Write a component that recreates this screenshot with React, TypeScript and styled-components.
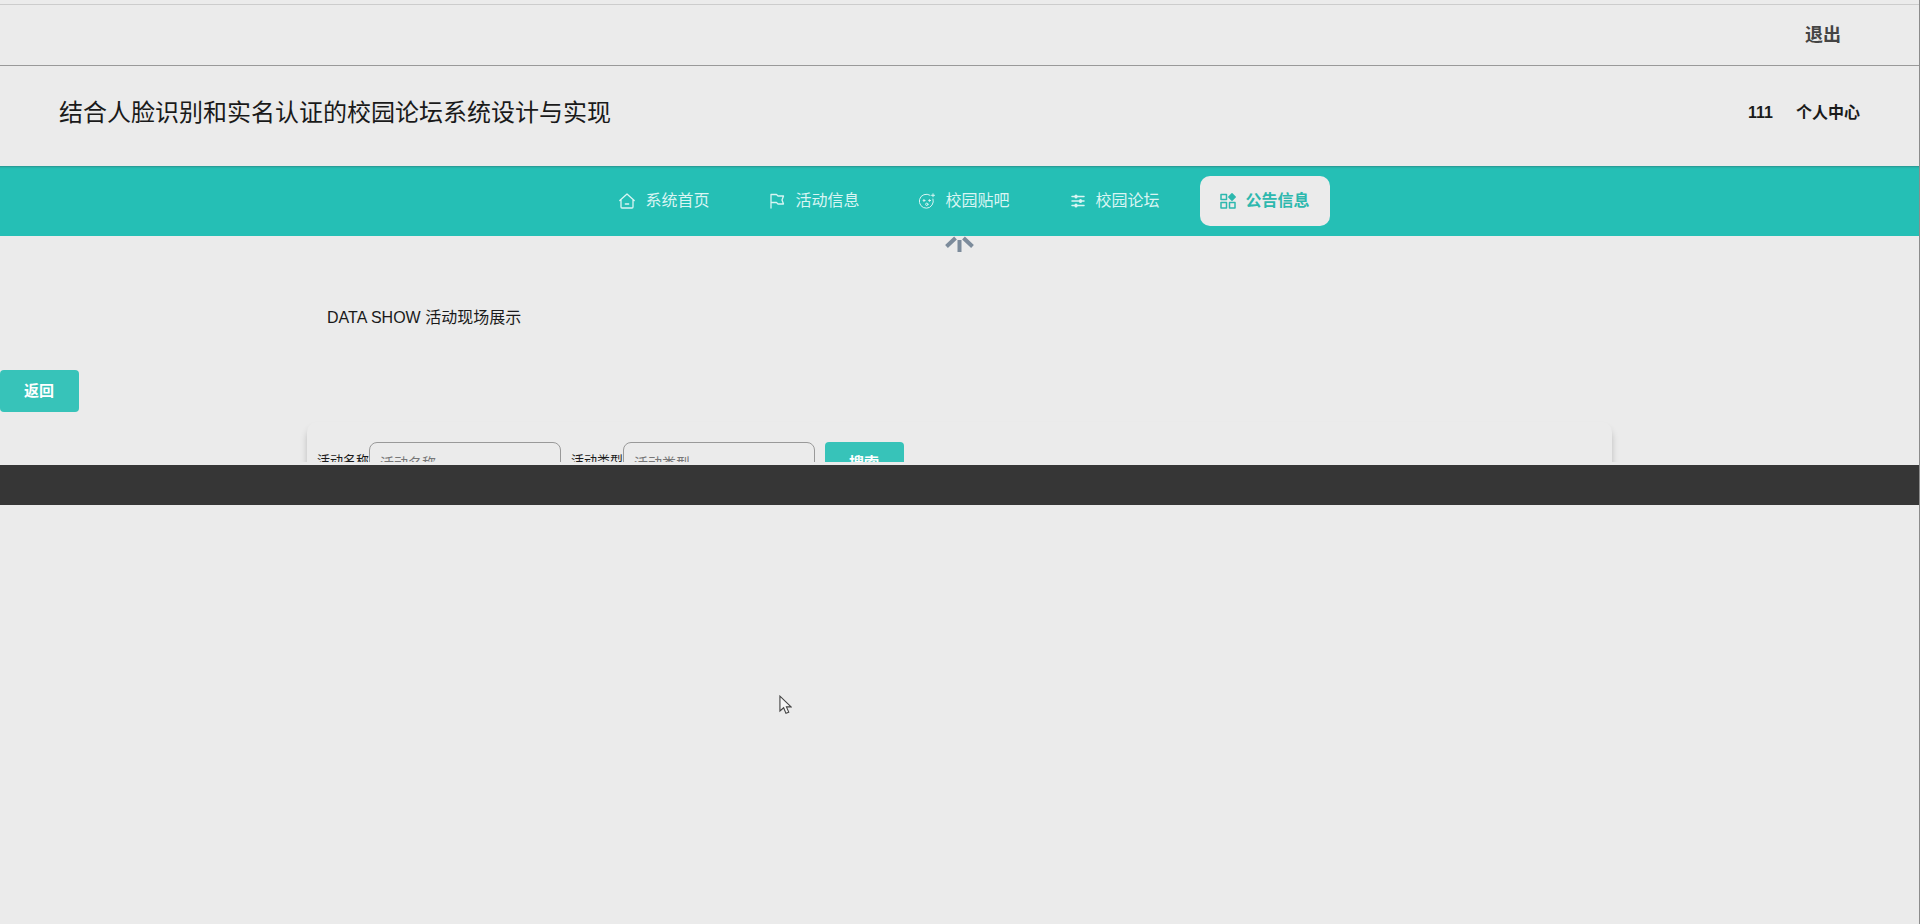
import React from "react";
import styled, { createGlobalStyle } from "styled-components";

const GlobalStyle = createGlobalStyle`
  * { box-sizing: border-box; }
  html { min-height: 100%; background: #ebebeb; }
  body {
    margin: 0;
    color: #1a1a1a;
    font-family: "Liberation Sans", "Noto Sans CJK SC", sans-serif;
    font-size: 16px;
  }
`;

const teal = "#25bfb5";

const Page = styled.div`
  min-height: 100vh;
  padding-top: 4px;
  border-right: 1px solid #8c8c8c;
  background: #ebebeb;
`;

const TopBar = styled.div`
  display: flex;
  align-items: center;
  justify-content: flex-end;
  height: 62px;
  padding: 0 78px;
  border-top: 1px solid #ccc;
  border-bottom: 1px solid #999;
`;

const TextButton = styled.button`
  padding: 0;
  border: 0;
  background: none;
  color: #444;
  font: bold 18px/24px "Liberation Sans", "Noto Sans CJK SC", sans-serif;
  cursor: pointer;
`;

const Header = styled.header`
  display: flex;
  align-items: center;
  justify-content: space-between;
  height: 100px;
  padding: 0 59px 6px 59px;
`;

const Title = styled.h1`
  margin: 0;
  font-size: 24px;
  font-weight: 400;
  line-height: 36px;
`;

const Account = styled.div`
  display: flex;
  gap: 23px;
  font-weight: 700;
  line-height: 24px;
`;

const AccountLink = styled.a`
  color: #1a1a1a;
  text-decoration: none;
`;

const Nav = styled.nav`
  display: flex;
  align-items: center;
  justify-content: center;
  gap: 20px;
  height: 70px;
  padding-left: 10px;
  background: ${teal};
  box-shadow: inset 0 3px 2px -2px #2a918d;
`;

const NavItem = styled.a<{ $active?: boolean }>`
  display: flex;
  align-items: center;
  gap: 10px;
  height: 50px;
  padding: 0 20px;
  border-radius: 10px;
  background: ${(p) => (p.$active ? "#ebebeb" : "transparent")};
  color: ${(p) => (p.$active ? "#2db8ae" : "#d9f5f3")};
  font-weight: ${(p) => (p.$active ? 700 : 400)};
  line-height: 24px;
  text-decoration: none;
`;

const Icon = styled.svg`
  width: 16px;
  height: 16px;
  fill: none;
  stroke: currentColor;
  stroke-linecap: round;
  stroke-linejoin: round;
`;

const Content = styled.main`
  position: relative;
  height: 226px;
  overflow: hidden;
`;

const Spinner = styled.svg`
  position: absolute;
  top: 0;
  left: 50%;
  width: 32px;
  height: 18px;
  margin-left: -16px;
  fill: none;
  stroke: #7c8b9b;
  stroke-width: 4;
`;

const SectionTitle = styled.h2`
  width: 68%;
  margin: 0 auto;
  padding: 70px 20px 40px;
  font-size: 16px;
  font-weight: 400;
  line-height: 24px;
`;

const Button = styled.button`
  height: 42px;
  padding: 0 25px 0 24px;
  border: 0;
  border-radius: 4px;
  background: #37c3b9;
  color: #fff;
  font: bold 15px/24px "Liberation Sans", "Noto Sans CJK SC", sans-serif;
  cursor: pointer;
`;

const SearchPanel = styled.form`
  display: flex;
  gap: 10px;
  width: 68%;
  height: 100px;
  margin: 10px auto 0;
  padding: 20px 10px;
  border-radius: 10px;
  box-shadow: 0 6px 6px #bbb;
`;

const Field = styled.label`
  display: flex;
  height: 42px;
  font-size: 13px;
  line-height: 38px;
`;

const TextInput = styled.input`
  width: 192px;
  height: 42px;
  padding: 0 10px;
  border: 1px solid #999;
  border-radius: 8px;
  background: transparent;
  font: 14px "Liberation Sans", "Noto Sans CJK SC", sans-serif;
  &::placeholder { color: #777; }
`;

const Footer = styled.footer`
  height: 40px;
  margin-top: 3px;
  background: #363636;
`;

const Pointer = styled.svg`
  position: fixed;
  top: 695px;
  left: 779px;
  width: 13px;
  height: 20px;
`;

const HomeIcon = () => (
  <Icon viewBox="0 0 16 16" strokeWidth="1.3">
    <path d="M.8 7.500 8 1l7.200 6.500M2 6.500V14q0 1 1 1h10q1 0 1-1V6.500M6.300 11h3.400" />
  </Icon>
);

const FlagIcon = () => (
  <Icon viewBox="0 0 16 16" strokeWidth="1.3">
    <path d="M2 15V1.500h5.500l1.500 1.500h5.500l-1.500 4 1.500 4H9L7.500 9.500H2" />
  </Icon>
);

const FaceIcon = () => (
  <Icon viewBox="0 0 16 16" strokeWidth="1">
    <path d="M11 2.200A7 7 0 1 0 14 6M14 .8v3M12.500 2.300h3" />
    <circle cx="5" cy="7.500" r=".8" fill="currentColor" />
    <circle cx="10.500" cy="7.500" r=".8" fill="currentColor" />
    <circle cx="7.800" cy="11.300" r="1.200" />
  </Icon>
);

const SlidersIcon = () => (
  <Icon viewBox="0 0 16 16" strokeWidth="1.5">
    <path d="M2 3.500h12M2 8h12M2 12.500h12" />
    <path d="M6 3v1M10.500 7.500v1M6 12v1" strokeWidth="3" />
  </Icon>
);

const GridIcon = () => (
  <Icon viewBox="0 0 16 16" strokeWidth="1.5">
    <path d="M1 1.500h5.500v5H1zM1 9.500h5.500V15H1zM9.500 9.500H15V15H9.500z" />
    <path d="m12 .8 3.200 3.200L12 7.200 8.800 4z" fill="currentColor" />
  </Icon>
);

const navItems = [
  { label: "系统首页", icon: HomeIcon },
  { label: "活动信息", icon: FlagIcon },
  { label: "校园贴吧", icon: FaceIcon },
  { label: "校园论坛", icon: SlidersIcon },
  { label: "公告信息", icon: GridIcon, active: true },
];

export default function App() {
  return (
    <Page>
      <GlobalStyle />
      <TopBar>
        <TextButton type="button">退出</TextButton>
      </TopBar>
      <Header>
        <Title>结合人脸识别和实名认证的校园论坛系统设计与实现</Title>
        <Account>
          <span>111</span>
          <AccountLink href="#profile">个人中心</AccountLink>
        </Account>
      </Header>
      <Nav>
        {navItems.map(({ label, icon: ItemIcon, active }) => (
          <NavItem key={label} href="#" $active={active}>
            <ItemIcon />
            {label}
          </NavItem>
        ))}
      </Nav>
      <Content>
        <Spinner viewBox="0 0 32 18">
          <path d="M11.500 2 2.500 10.500M15.500 4v12M19.500 2l9 8.500" />
        </Spinner>
        <SectionTitle>DATA SHOW 活动现场展示</SectionTitle>
        <Button type="button">返回</Button>
        <SearchPanel>
          <Field>
            活动名称
            <TextInput placeholder="活动名称" />
          </Field>
          <Field>
            活动类型
            <TextInput placeholder="活动类型" />
          </Field>
          <Button type="submit">搜索</Button>
        </SearchPanel>
      </Content>
      <Footer />
      <Pointer viewBox="0 0 14 21">
        <path
          d="M1 1v16l4-3.500 2.500 6 3-1.300L8 12.500h5z"
          fill="#f5f5f5"
          stroke="#444"
          strokeWidth="1.200"
        />
      </Pointer>
    </Page>
  );
}
